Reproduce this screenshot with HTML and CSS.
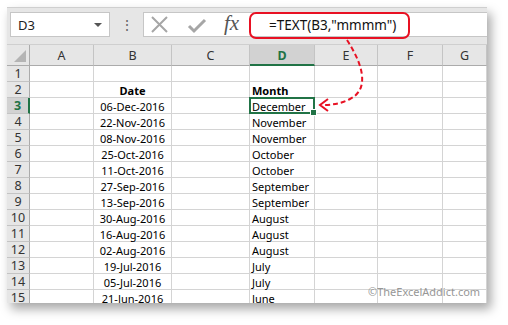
FILE: index.html
```html
<!DOCTYPE html>
<html lang="en">
<head>
  <meta charset="UTF-8" />
  <meta name="viewport" content="width=device-width, initial-scale=1" />
  <title>TEXT function - month name</title>
  <link rel="stylesheet" href="styles.css">
</head>
<body>

  <div class="window">
    <div class="toolbar">
      <div class="name-box">
        <span>D3</span>
        <span class="caret"></span>
      </div>
      <div class="grip">⋮</div>
      <div class="formula-bar">
        <svg class="fb-icon" width="20" height="18" viewBox="0 0 20 18">
          <path d="M2 1 L17 16 M17 1 L2 16" stroke="#a6a6a6" stroke-width="2" fill="none" />
        </svg>
        <svg class="fb-icon" width="20" height="18" viewBox="0 0 20 18">
          <path d="M2 10 L7 15 L18 4" stroke="#a6a6a6" stroke-width="3" fill="none" />
        </svg>
        <span class="fx">fx</span>
        <span class="formula">=TEXT(B3,"mmmm")</span>
      </div>
    </div>

    <div class="sheet" id="sheet"></div>
  </div>

  <div class="watermark">©TheExcelAddict.com</div>

  <svg class="callout" width="508" height="325" viewBox="0 0 508 325">
    <rect x="250" y="13" width="159" height="25" rx="6" ry="6" fill="none" stroke="#e81123" stroke-width="2" />
    <path d="M347 40 C360 60 372 88 350 99 C340 104 332 105 322 105" fill="none" stroke="#e81123" stroke-width="2" stroke-dasharray="5 3" />
    <path d="M328 99 L320 105 L328 111" fill="none" stroke="#e81123" stroke-width="2" />
  </svg>

  <script>
    (() => {
      const sheet = document.getElementById('sheet');
      const cols = ['A', 'B', 'C', 'D', 'E', 'F', 'G'];

      // Rows 3..15: Date in column B, Month in column D
      const data = [
        ['06-Dec-2016', 'December'],
        ['22-Nov-2016', 'November'],
        ['08-Nov-2016', 'November'],
        ['25-Oct-2016', 'October'],
        ['11-Oct-2016', 'October'],
        ['27-Sep-2016', 'September'],
        ['13-Sep-2016', 'September'],
        ['30-Aug-2016', 'August'],
        ['16-Aug-2016', 'August'],
        ['02-Aug-2016', 'August'],
        ['19-Jul-2016', 'July'],
        ['05-Jul-2016', 'July'],
        ['21-Jun-2016', 'June']
      ];

      let html = '<div class="corner"><span class="corner-tri"></span></div>';
      cols.forEach(c => {
        html += `<div class="col-head${c === 'D' ? ' active' : ''}">${c}</div>`;
      });

      for (let r = 1; r <= 15; r++) {
        html += `<div class="row-head${r === 3 ? ' active' : ''}">${r}</div>`;
        cols.forEach(c => {
          let text = '';
          let cls = 'cell';
          if (r === 2 && c === 'B') { text = 'Date'; cls += ' bold center'; }
          if (r === 2 && c === 'D') { text = 'Month'; cls += ' bold'; }
          if (r >= 3) {
            if (c === 'B') { text = data[r - 3][0]; cls += ' center'; }
            if (c === 'D') { text = data[r - 3][1]; }
          }
          if (r === 3 && c === 'D') cls += ' selected';
          html += `<div class="${cls}">${text}</div>`;
        });
      }

      sheet.innerHTML = html;
    })();
  </script>
</body>
</html>
```

FILE: styles.css
```css
body {
  margin: 0;
  background: #fff;
  font-family: "Noto Sans", Arial, sans-serif;
  position: relative;
  width: 508px;
  height: 325px;
  overflow: hidden;
}
.window {
  margin: 7px 0 0 7px;
  width: 480px;
  height: 296px;
  overflow: hidden;
  background: #fff;
  box-shadow: 4px 6px 10px rgba(0,0,0,0.35);
}
.toolbar {
  height: 38px;
  box-sizing: border-box;
  background: #e6e6e6;
  border-top: 1px solid #cfcfcf;
  border-bottom: 1px solid #cfcfcf;
  display: flex;
  align-items: flex-start;
  padding: 4px 0 0 3px;
}
.name-box {
  width: 100px;
  height: 25px;
  box-sizing: border-box;
  background: #fff;
  border: 1px solid #c6c6c6;
  display: flex;
  align-items: center;
  justify-content: space-between;
  padding: 0 7px 0 7px;
  font-size: 13px;
  color: #222;
}
.caret {
  width: 0;
  height: 0;
  border-left: 4px solid transparent;
  border-right: 4px solid transparent;
  border-top: 4px solid #555;
}
.grip {
  width: 33px;
  text-align: center;
  font-size: 14px;
  line-height: 25px;
  color: #666;
}
.formula-bar {
  flex: 1;
  height: 25px;
  box-sizing: border-box;
  background: #fff;
  border: 1px solid #c6c6c6;
  border-right: none;
  display: flex;
  align-items: center;
  padding-left: 6px;
}
.fb-icon {
  margin-right: 17px;
}
.fx {
  font-family: "Liberation Serif", serif;
  font-style: italic;
  font-size: 21px;
  color: #555;
  margin: 0 0 3px 0;
  width: 26px;
}
.formula {
  margin-left: 19px;
  font-size: 13.5px;
  color: #111;
}
.sheet {
  display: grid;
  grid-template-columns: 23px 64px 78px 78px 65px 63px 65px 44px;
  grid-template-rows: 21px;
  grid-auto-rows: 16px;
}
.corner, .col-head, .row-head, .cell {
  box-sizing: border-box;
}
.corner {
  background: #e6e6e6;
  border-right: 1px solid #ababab;
  border-bottom: 1px solid #ababab;
  position: relative;
}
.corner-tri {
  position: absolute;
  right: 3px;
  bottom: 3px;
  width: 0;
  height: 0;
  border-left: 12px solid transparent;
  border-bottom: 12px solid #b4b4b4;
}
.col-head {
  background: #e6e6e6;
  border-right: 1px solid #c4c4c4;
  border-bottom: 1px solid #ababab;
  text-align: center;
  font-size: 12.5px;
  line-height: 22px;
  color: #333;
}
.col-head.active {
  background: #d2d2d2;
  border-bottom: 2px solid #217346;
  color: #217346;
  font-weight: bold;
}
.row-head {
  background: #e6e6e6;
  border-right: 1px solid #ababab;
  border-bottom: 1px solid #c4c4c4;
  text-align: center;
  font-size: 12.5px;
  line-height: 16px;
  color: #333;
}
.row-head.active {
  background: #d2d2d2;
  border-right: 2px solid #217346;
  color: #217346;
  font-weight: bold;
}
.cell {
  border-right: 1px solid #d4d4d4;
  border-bottom: 1px solid #d4d4d4;
  font-size: 11px;
  line-height: 13px;
  padding: 2px 2px 0;
  white-space: nowrap;
  color: #000;
}
.center { text-align: center; }
.bold { font-weight: bold; }
.selected {
  position: relative;
}
.selected::after {
  content: "";
  position: absolute;
  left: -1px;
  top: -1px;
  right: -1px;
  bottom: -1px;
  border: 2px solid #217346;
}
.selected::before {
  content: "";
  position: absolute;
  right: -3px;
  bottom: -3px;
  width: 5px;
  height: 5px;
  background: #217346;
  border: 1px solid #fff;
  z-index: 1;
}
.watermark {
  position: absolute;
  left: 368px;
  top: 284px;
  font-size: 11px;
  color: #8c8c8c;
  opacity: 0.9;
}
.callout {
  position: absolute;
  left: 0;
  top: 0;
  pointer-events: none;
}
```
